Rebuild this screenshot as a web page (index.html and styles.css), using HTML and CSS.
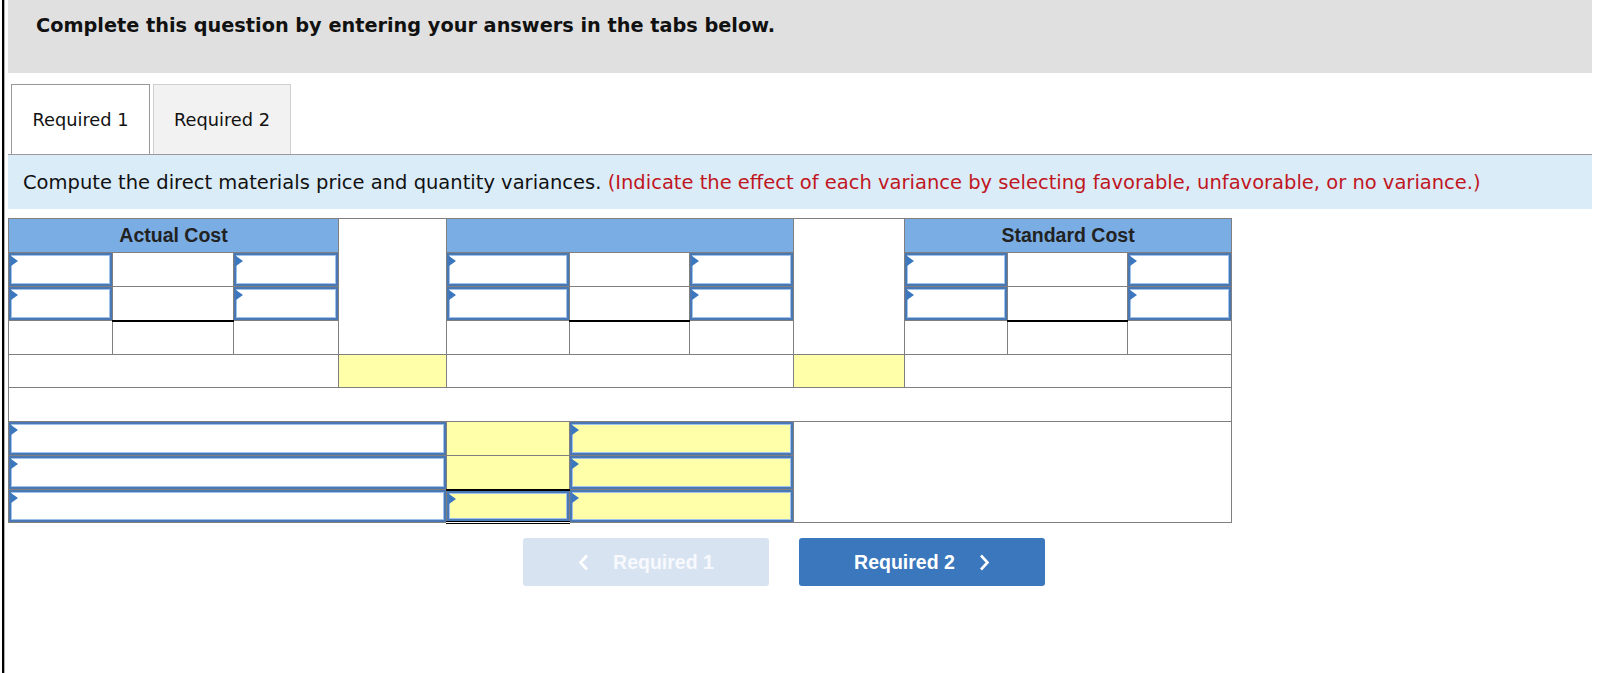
FILE: index.html
```html
<!DOCTYPE html>
<html>
<head>
<meta charset="utf-8">
<link rel="stylesheet" href="styles.css">
</head>
<body>
<div class="frame">
  <div class="page">
    <div class="qhead">Complete this question by entering your answers in the tabs below.</div>
    <div class="tabs">
      <div class="tab active">Required 1</div>
      <div class="tab">Required 2</div>
    </div>
    <div class="band">Compute the direct materials price and quantity variances. <span class="red">(Indicate the effect of each variance by selecting favorable, unfavorable, or no variance.)</span></div>
    <table class="grid">
      <colgroup>
        <col style="width:104px"><col style="width:121px"><col style="width:105px">
        <col style="width:108px">
        <col style="width:123px"><col style="width:120px"><col style="width:104px">
        <col style="width:111px">
        <col style="width:103px"><col style="width:120px"><col style="width:104px">
      </colgroup>
      <tr class="r34">
        <th colspan="3" class="hd">Actual Cost</th>
        <td rowspan="4" class="gap"></td>
        <th colspan="3" class="hd"></th>
        <td rowspan="4" class="gap"></td>
        <th colspan="3" class="hd">Standard Cost</th>
      </tr>
      <tr class="r34">
        <td class="c"><div class="inp"><i class="flag"></i></div></td>
        <td></td>
        <td class="c"><div class="inp"><i class="flag"></i></div></td>
        <td class="c"><div class="inp"><i class="flag"></i></div></td>
        <td></td>
        <td class="c"><div class="inp"><i class="flag"></i></div></td>
        <td class="c"><div class="inp"><i class="flag"></i></div></td>
        <td></td>
        <td class="c"><div class="inp"><i class="flag"></i></div></td>
      </tr>
      <tr class="r34">
        <td class="c"><div class="inp"><i class="flag"></i></div></td>
        <td class="ul"></td>
        <td class="c"><div class="inp"><i class="flag"></i></div></td>
        <td class="c"><div class="inp"><i class="flag"></i></div></td>
        <td class="ul"></td>
        <td class="c"><div class="inp"><i class="flag"></i></div></td>
        <td class="c"><div class="inp"><i class="flag"></i></div></td>
        <td class="ul"></td>
        <td class="c"><div class="inp"><i class="flag"></i></div></td>
      </tr>
      <tr class="r34">
        <td></td><td></td><td></td>
        <td></td><td></td><td></td>
        <td></td><td></td><td></td>
      </tr>
      <tr class="r33">
        <td colspan="3"></td>
        <td class="yel"></td>
        <td colspan="3"></td>
        <td class="yel"></td>
        <td colspan="3"></td>
      </tr>
      <tr class="r34">
        <td colspan="11"></td>
      </tr>
      <tr class="r34">
        <td colspan="4" class="c"><div class="inp"><i class="flag"></i></div></td>
        <td class="yel"></td>
        <td colspan="2" class="c"><div class="inp y"><i class="flag"></i></div></td>
        <td colspan="4" rowspan="3"></td>
      </tr>
      <tr class="r34">
        <td colspan="4" class="c"><div class="inp"><i class="flag"></i></div></td>
        <td class="yel ul"></td>
        <td colspan="2" class="c"><div class="inp y"><i class="flag"></i></div></td>
      </tr>
      <tr class="r33">
        <td colspan="4" class="c"><div class="inp"><i class="flag"></i></div></td>
        <td class="c dul"><div class="inp y"><i class="flag"></i></div></td>
        <td colspan="2" class="c"><div class="inp y"><i class="flag"></i></div></td>
      </tr>
    </table>
    <div class="nav">
      <div class="btn off">
        <svg class="chev" width="11" height="17" viewBox="0 0 11 17"><path d="M9 1.5 L2.5 8.5 L9 15.5" fill="none" stroke="#ffffff" stroke-width="2.6"/></svg>
        <span>Required 1</span>
      </div>
      <div class="btn on">
        <span>Required 2</span>
        <svg class="chev" width="11" height="17" viewBox="0 0 11 17"><path d="M2 1.5 L8.5 8.5 L2 15.5" fill="none" stroke="#ffffff" stroke-width="2.6"/></svg>
      </div>
    </div>
  </div>
</div>
</body>
</html>
```

FILE: styles.css
```css
html, body {
  margin: 0;
  padding: 0;
  background: #fff;
}
body {
  font-family: "DejaVu Sans", Verdana, sans-serif;
  color: #000;
}
.frame {
  margin-left: 2px;
  border-left: 2px solid #000;
  min-height: 673px;
  box-sizing: border-box;
}
.page {
  border-left: 1px solid #b0b0b0;
  padding-left: 3px;
  padding-right: 5px;
  min-height: 673px;
  box-sizing: border-box;
}
.qhead {
  background: #e0e0e0;
  height: 73px;
  box-sizing: border-box;
  padding: 14px 0 0 28px;
  font-weight: bold;
  font-size: 19.3px;
  line-height: 24px;
  color: #111;
}
.tabs {
  display: flex;
  gap: 3px;
  margin-top: 11px;
  padding-left: 3px;
  border-bottom: 1px solid #999;
}
.tab {
  height: 70px;
  box-sizing: border-box;
  width: 138px;
  display: flex;
  align-items: center;
  justify-content: center;
  font-size: 17.8px;
  color: #111;
  background: #f2f2f2;
  border: 1px solid #cfcfcf;
  border-bottom: none;
}
.tab.active {
  width: 139px;
  background: #fff;
  border-color: #999;
}
.band {
  background: #dbecf9;
  height: 54px;
  box-sizing: border-box;
  padding: 16px 0 0 15px;
  font-size: 19.5px;
  line-height: 24px;
  color: #111;
}
.red {
  color: #c0161e;
}
.grid {
  margin-top: 9px;
  border-collapse: collapse;
  table-layout: fixed;
  width: 1223px;
}
.grid td, .grid th {
  border: 1px solid #7f7f7f;
  padding: 0;
  background: #fff;
}
.r34 { height: 34px; }
.r33 { height: 33px; }
.grid th.hd {
  background: #7aade4;
  font-family: "Liberation Sans", Arial, sans-serif;
  font-weight: bold;
  font-size: 19.5px;
  color: #222;
  text-align: center;
}
.grid td.gap { background: #fff; }
.grid td.yel { background: #ffffaa; }
.grid td.ul { border-bottom: 2px solid #000; }
.grid td.dul { border-bottom: 3px double #000; }
.grid td.c { position: relative; }
.inp {
  position: absolute;
  inset: 0;
  border: 2px solid #4a78b5;
  box-shadow: inset 0 0 0 1px #9fc2ea;
  background: #fff;
}
.inp.y { background: #ffffaa; }
.flag {
  position: absolute;
  top: 1px;
  left: 0;
  width: 0;
  height: 0;
  border-left: 7px solid #3b77bf;
  border-top: 5px solid transparent;
  border-bottom: 5px solid transparent;
}
.nav {
  display: flex;
  gap: 30px;
  margin-top: 14px;
  padding-left: 515px;
}
.btn {
  width: 246px;
  height: 48px;
  border-radius: 3px;
  display: flex;
  align-items: center;
  justify-content: center;
  gap: 24px;
  font-family: "Liberation Sans", Arial, sans-serif;
  font-weight: bold;
  font-size: 19.5px;
  color: #fff;
}
.btn.off {
  background: #d7e3f1;
  color: #f7f9fd;
}
.btn.on {
  background: #3a77bc;
}
.chev { display: block; }
```
